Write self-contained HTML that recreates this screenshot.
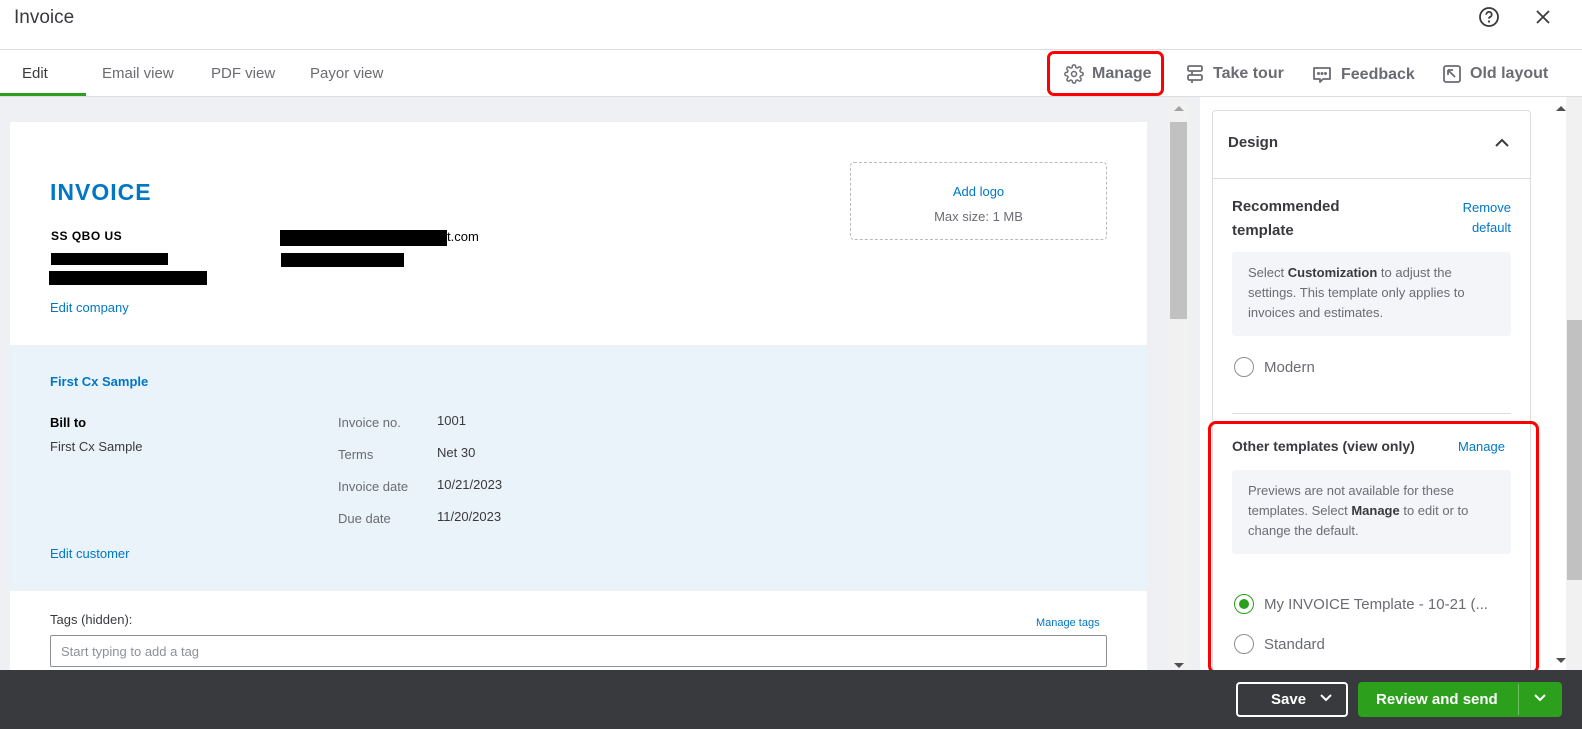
<!DOCTYPE html>
<html><head><meta charset="utf-8"><style>
*{box-sizing:border-box;margin:0;padding:0}
body{width:1582px;height:729px;overflow:hidden;font-family:"Liberation Sans",sans-serif;background:#fff;position:relative;color:#393a3d}
.abs{position:absolute}
.blue{color:#0077c5}
.tab{position:absolute;top:65px;font-size:15px;color:#6b6c72}
.tb{position:absolute;top:64px;font-size:16px;color:#393a3d;font-weight:bold;display:flex;align-items:center;gap:8px}
.blk{position:absolute;background:#000}
.lbl{position:absolute;font-size:13px;color:#6b6c72}
.val{position:absolute;font-size:13px;color:#393a3d}
.radio{position:absolute;width:20px;height:20px;border:1.5px solid #8d9096;border-radius:50%}
</style></head><body>
<div class="abs" style="left:14px;top:7px;font-size:19px;color:#393a3d">Invoice</div>
<svg class="abs" style="left:1478px;top:6px" width="22" height="22" viewBox="0 0 22 22"><circle cx="11" cy="11" r="9" fill="none" stroke="#393a3d" stroke-width="1.8"/><path d="M8.3 8.6a2.7 2.7 0 1 1 3.6 2.5c-.7.3-.9.8-.9 1.5" fill="none" stroke="#393a3d" stroke-width="1.8"/><circle cx="11" cy="15.5" r="1.1" fill="#393a3d"/></svg>
<svg class="abs" style="left:1535px;top:9px" width="16" height="16"><path d="M2 2L14 14M14 2L2 14" stroke="#393a3d" stroke-width="1.8"/></svg>
<div class="abs" style="left:0;top:49px;width:1582px;height:1px;background:#dcdde0"></div>
<div class="tab" style="left:22px;color:#393a3d">Edit</div>
<div class="tab" style="left:102px">Email view</div>
<div class="tab" style="left:211px">PDF view</div>
<div class="tab" style="left:310px">Payor view</div>
<div class="abs" style="left:0;top:93px;width:86px;height:4px;background:#2ca01c"></div>
<div class="abs" style="left:0;top:96px;width:1582px;height:1px;background:#dcdde0"></div>
<div class="tb" style="left:1064px;color:#6b6c72"><svg width="20" height="20" viewBox="0 0 24 24" fill="none" stroke="#6b6c72" stroke-width="1.8"><circle cx="12" cy="12" r="3"/><path d="M19.4 15a1.7 1.7 0 0 0 .3 1.8l.1.1a2 2 0 1 1-2.8 2.8l-.1-.1a1.7 1.7 0 0 0-1.8-.3 1.7 1.7 0 0 0-1 1.5V21a2 2 0 1 1-4 0v-.1a1.7 1.7 0 0 0-1.1-1.5 1.7 1.7 0 0 0-1.8.3l-.1.1a2 2 0 1 1-2.8-2.8l.1-.1a1.7 1.7 0 0 0 .3-1.8 1.7 1.7 0 0 0-1.5-1H3a2 2 0 1 1 0-4h.1a1.7 1.7 0 0 0 1.5-1.1 1.7 1.7 0 0 0-.3-1.8l-.1-.1a2 2 0 1 1 2.8-2.8l.1.1a1.7 1.7 0 0 0 1.8.3H9a1.7 1.7 0 0 0 1-1.5V3a2 2 0 1 1 4 0v.1a1.7 1.7 0 0 0 1 1.5 1.7 1.7 0 0 0 1.8-.3l.1-.1a2 2 0 1 1 2.8 2.8l-.1.1a1.7 1.7 0 0 0-.3 1.8V9a1.7 1.7 0 0 0 1.5 1H21a2 2 0 1 1 0 4h-.1a1.7 1.7 0 0 0-1.5 1z"/></svg>Manage</div>
<div class="abs" style="left:1047px;top:51px;width:117px;height:45px;border:3px solid #f00;border-radius:7px"></div>
<div class="tb" style="left:1185px;color:#6b6c72"><svg width="20" height="20" viewBox="0 0 20 20" fill="none" stroke="#6b6c72" stroke-width="1.8"><rect x="3" y="2" width="14" height="5" rx="1.5"/><rect x="3" y="11" width="14" height="5" rx="1.5"/><path d="M7 7v4M7 16v3"/></svg>Take tour</div>
<div class="tb" style="left:1311px;color:#6b6c72"><svg width="22" height="22" viewBox="0 0 22 22" fill="none" stroke="#6b6c72" stroke-width="1.8"><path d="M3 4h16v11h-7l-3 3v-3H3z" stroke-linejoin="round"/><circle cx="7.5" cy="9.5" r=".6" fill="#6b6c72"/><circle cx="11" cy="9.5" r=".6" fill="#6b6c72"/><circle cx="14.5" cy="9.5" r=".6" fill="#6b6c72"/></svg>Feedback</div>
<div class="tb" style="left:1442px;color:#6b6c72"><svg width="20" height="20" viewBox="0 0 20 20" fill="none" stroke="#6b6c72" stroke-width="1.8"><rect x="2" y="2" width="16" height="16" rx="2"/><path d="M6 6l7 7M6 6v5M6 6h5"/></svg>Old layout</div>

<div class="abs" style="left:0;top:97px;width:1200px;height:573px;background:#eef0f3"></div>
<div class="abs" style="left:10px;top:122px;width:1137px;height:548px;background:#fff"></div>
<div class="abs" style="left:50px;top:179px;font-size:23px;font-weight:bold;color:#0077c5;letter-spacing:1px">INVOICE</div>
<div class="abs" style="left:51px;top:229px;font-size:12px;font-weight:bold;color:#000;letter-spacing:.5px">SS QBO US</div>
<div class="blk" style="left:51px;top:253px;width:117px;height:12px"></div>
<div class="blk" style="left:49px;top:271px;width:158px;height:14px"></div>
<div class="blk" style="left:280px;top:230px;width:167px;height:16px"></div>
<div class="abs" style="left:447px;top:229px;font-size:13px;color:#000">t.com</div>
<div class="blk" style="left:281px;top:253px;width:123px;height:14px"></div>
<div class="abs blue" style="left:50px;top:300px;font-size:13px">Edit company</div>
<div class="abs" style="left:850px;top:162px;width:257px;height:78px;border:1px dashed #b8bac0;border-radius:4px;text-align:center;font-size:13px"><div class="blue" style="margin-top:21px">Add logo</div><div style="color:#6b6c72;margin-top:10px">Max size: 1 MB</div></div>
<div class="abs" style="left:10px;top:345px;width:1137px;height:246px;background:#eaf2fa"></div>
<div class="abs blue" style="left:50px;top:374px;font-size:13px;font-weight:bold">First Cx Sample</div>
<div class="abs" style="left:50px;top:415px;font-size:13px;font-weight:bold;color:#000">Bill to</div>
<div class="val" style="left:50px;top:439px">First Cx Sample</div>
<div class="lbl" style="left:338px;top:415px">Invoice no.</div><div class="val" style="left:437px;top:413px">1001</div>
<div class="lbl" style="left:338px;top:447px">Terms</div><div class="val" style="left:437px;top:445px">Net 30</div>
<div class="lbl" style="left:338px;top:479px">Invoice date</div><div class="val" style="left:437px;top:477px">10/21/2023</div>
<div class="lbl" style="left:338px;top:511px">Due date</div><div class="val" style="left:437px;top:509px">11/20/2023</div>
<div class="abs blue" style="left:50px;top:546px;font-size:13px">Edit customer</div>
<div class="lbl" style="left:50px;top:612px;color:#393a3d">Tags (hidden):</div>
<div class="abs blue" style="left:1036px;top:617px;font-size:11px">Manage tags</div>
<div class="abs" style="left:50px;top:635px;width:1057px;height:32px;border:1px solid #8d9096;border-radius:2px;padding:8px 10px;font-size:13px;color:#8d9096">Start typing to add a tag</div>
<div class="abs" style="left:1168px;top:97px;width:22px;height:573px;background:#f1f1f1"></div>
<div class="abs" style="left:1170px;top:122px;width:17px;height:197px;background:#c1c1c1"></div>
<div class="abs" style="left:1174px;top:106px;border:5px solid transparent;border-bottom:5px solid #a3a3a3;border-top:0"></div>
<div class="abs" style="left:1174px;top:663px;border:5px solid transparent;border-top:5px solid #505050;border-bottom:0"></div>

<div class="abs" style="left:1212px;top:110px;width:319px;height:570px;border:1px solid #dcdde0;border-radius:4px;background:#fff"></div>
<div class="abs" style="left:1228px;top:134px;font-size:15px;font-weight:bold;color:#393a3d">Design</div>
<svg class="abs" style="left:1494px;top:137px" width="16" height="12"><path d="M2 9L8 3L14 9" fill="none" stroke="#393a3d" stroke-width="2"/></svg>
<div class="abs" style="left:1213px;top:178px;width:317px;height:1px;background:#dcdde0"></div>
<div class="abs" style="left:1232px;top:195px;font-size:15px;font-weight:bold;line-height:24px;color:#393a3d">Recommended<br>template</div>
<div class="abs blue" style="left:1440px;top:198px;width:71px;font-size:13px;text-align:right;line-height:20px">Remove<br>default</div>
<div class="abs" style="left:1232px;top:252px;width:279px;height:84px;background:#f4f5f8;border-radius:3px;padding:11px 16px;font-size:13px;line-height:20px;color:#6b6c72">Select <b style="color:#393a3d">Customization</b> to adjust the settings. This template only applies to invoices and estimates.</div>
<div class="radio" style="left:1234px;top:357px"></div>
<div class="abs" style="left:1264px;top:359px;font-size:15px;color:#6b6c72">Modern</div>
<div class="abs" style="left:1232px;top:413px;width:279px;height:1px;background:#dcdde0"></div>
<div class="abs" style="left:1232px;top:438px;font-size:14px;font-weight:bold;color:#393a3d">Other templates (view only)</div>
<div class="abs blue" style="left:1458px;top:439px;font-size:13px">Manage</div>
<div class="abs" style="left:1232px;top:470px;width:279px;height:84px;background:#f4f5f8;border-radius:3px;padding:11px 16px;font-size:13px;line-height:20px;color:#6b6c72">Previews are not available for these templates. Select <b style="color:#393a3d">Manage</b> to edit or to change the default.</div>
<div class="radio" style="left:1234px;top:594px;border-color:#2ca01c"></div>
<div class="abs" style="left:1239px;top:599px;width:10px;height:10px;border-radius:50%;background:#2ca01c"></div>
<div class="abs" style="left:1264px;top:596px;font-size:15px;color:#6b6c72">My INVOICE Template - 10-21 (...</div>
<div class="radio" style="left:1234px;top:634px"></div>
<div class="abs" style="left:1264px;top:636px;font-size:15px;color:#6b6c72">Standard</div>
<div class="abs" style="left:1208px;top:421px;width:331px;height:253px;border:3px solid #f00;border-radius:8px"></div>
<div class="abs" style="left:1566px;top:97px;width:16px;height:573px;background:#f1f1f1"></div>
<div class="abs" style="left:1567px;top:320px;width:15px;height:260px;background:#c1c1c1"></div>
<div class="abs" style="left:1556px;top:106px;border:5px solid transparent;border-bottom:5px solid #505050;border-top:0"></div>
<div class="abs" style="left:1556px;top:658px;border:5px solid transparent;border-top:5px solid #505050;border-bottom:0"></div>

<div class="abs" style="left:0;top:670px;width:1582px;height:59px;background:#393a3d"></div>
<div class="abs" style="left:1236px;top:682px;width:112px;height:35px;border:2px solid #fff;border-radius:4px;color:#fff;font-weight:bold;font-size:15px;padding:7px 0 0 33px">Save</div>
<svg class="abs" style="left:1318px;top:692px" width="16" height="12"><path d="M3 3L8 8L13 3" fill="none" stroke="#fff" stroke-width="2"/></svg>
<div class="abs" style="left:1358px;top:682px;width:204px;height:35px;background:#2ca01c;border-radius:4px;color:#fff;font-weight:bold;font-size:15px;padding:9px 0 0 18px">Review and send</div>
<div class="abs" style="left:1518px;top:684px;width:1px;height:31px;background:#6fc062"></div>
<svg class="abs" style="left:1532px;top:692px" width="16" height="12"><path d="M3 3L8 8L13 3" fill="none" stroke="#fff" stroke-width="2"/></svg>
</body></html>
